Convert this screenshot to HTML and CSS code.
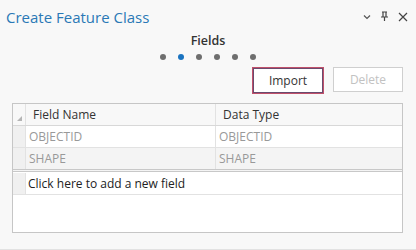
FILE: index.html
```html
<!DOCTYPE html>
<html lang="en">
<head>
    <meta charset="UTF-8">
    <title>Create Feature Class</title>
    <link rel="stylesheet" href="styles.css">
</head>
<body>
    <div class="pane">
        <div class="pane-header">
            <span class="pane-title">Create Feature Class</span>
            <div class="pane-icons">
                <svg width="8" height="6" viewBox="0 0 8 6"><path d="M1 1.5 L4 4.5 L7 1.5" fill="none" stroke="#555" stroke-width="1.2"/></svg>
                <svg width="9" height="11" viewBox="0 0 9 11"><path d="M2 1 H7 M3 1 V6 M6 1 V6 M1 6 H8 M4.5 6 V10" fill="none" stroke="#444" stroke-width="1.2"/></svg>
                <svg width="10" height="10" viewBox="0 0 10 10"><path d="M1 1 L9 9 M9 1 L1 9" fill="none" stroke="#444" stroke-width="1.2"/></svg>
            </div>
        </div>

        <div class="step">
            <div class="step-title">Fields</div>
            <div class="dots">
                <span class="dot"></span>
                <span class="dot active"></span>
                <span class="dot"></span>
                <span class="dot"></span>
                <span class="dot"></span>
                <span class="dot"></span>
            </div>
        </div>

        <div class="actions">
            <button class="btn btn-focus">Import</button>
            <button class="btn" disabled>Delete</button>
        </div>

        <div class="grid">
            <div class="row head">
                <div class="cell rh"><span class="sort"></span></div>
                <div class="cell">Field Name</div>
                <div class="cell">Data Type</div>
            </div>
            <div class="row ro">
                <div class="cell rh"></div>
                <div class="cell">OBJECTID</div>
                <div class="cell">OBJECTID</div>
            </div>
            <div class="row ro alt">
                <div class="cell rh"></div>
                <div class="cell">SHAPE</div>
                <div class="cell">SHAPE</div>
            </div>
            <div class="row new">
                <div class="cell rh"></div>
                <div class="cell span">Click here to add a new field</div>
            </div>
        </div>
    </div>
</body>
</html>
```

FILE: styles.css
```css
/* Pane de géotraitement */
body {
    margin: 0;
    background: #f8f8f8;
    font-family: "Open Sans", "Noto Sans", sans-serif;
    color: #222;
}

.pane {
    width: 416px;
    height: 250px;
    box-sizing: border-box;
    border-bottom: 1px solid #e2e2e2;
}

.pane-header {
    display: flex;
    align-items: center;
    justify-content: space-between;
    height: 33px;
    padding: 0 8px 0 6px;
}

.pane-title {
    font-size: 15px;
    color: #2a78b6;
}

.pane-icons {
    display: flex;
    align-items: center;
    gap: 9px;
}

.step {
    display: flex;
    flex-direction: column;
    align-items: center;
}

.step-title {
    font-size: 12.5px;
    font-weight: 600;
    color: #333;
    line-height: 16px;
}

.dots {
    display: flex;
    gap: 12px;
    margin-top: 5px;
}

.dot {
    width: 6px;
    height: 6px;
    border-radius: 50%;
    background: #6e6e6e;
}

.dot.active {
    background: #1a73c0;
}

.actions {
    display: flex;
    justify-content: flex-end;
    gap: 9px;
    padding: 7px 13px 0 0;
}

.btn {
    font-family: inherit;
    font-size: 12px;
    width: 70px;
    height: 25px;
    background: #fff;
    border: 1px solid #c8c8c8;
    color: #333;
    padding: 0;
}

.btn:disabled {
    color: #c2c2c2;
    border-color: #cfcfcf;
}

.btn-focus {
    width: 72px;
    height: 27px;
    border: 2px solid #6a4a6e;
    outline: 1px solid #c0506a;
    outline-offset: -1px;
}

.grid {
    margin: 9px 13px 0 12px;
    height: 130px;
    box-sizing: border-box;
    border: 1px solid #c6c6c6;
    background: #fff;
    font-size: 12px;
}

.row {
    display: grid;
    grid-template-columns: 13px 190px 1fr;
    height: 21px;
    border-bottom: 1px solid #e2e2e2;
}

.cell {
    display: flex;
    align-items: center;
    padding-left: 3px;
    border-right: 1px solid #e2e2e2;
}

.cell:last-child {
    border-right: none;
}

.cell.rh {
    padding: 0;
    background: #f0f0f0;
}

.row.head {
    background: #f8f8f8;
    border-bottom: 1px solid #d8d8d8;
}

.row.head .cell {
    color: #333;
    padding-left: 7px;
}

.row.head .rh {
    background: #f8f8f8;
    align-items: flex-end;
    justify-content: center;
    padding: 0 0 4px 0;
    box-sizing: border-box;
}

.sort {
    width: 0;
    height: 0;
    border-left: 5px solid transparent;
    border-bottom: 5px solid #b4b4b4;
}

.row.ro .cell {
    color: #999;
}

.row.alt {
    background: #f4f4f4;
    border-bottom: 3px double #c8c8c8;
}

.row.new {
    margin-top: 1px;
}

.cell.span {
    grid-column: 2 / 4;
    color: #222;
    padding-left: 2px;
}
```
